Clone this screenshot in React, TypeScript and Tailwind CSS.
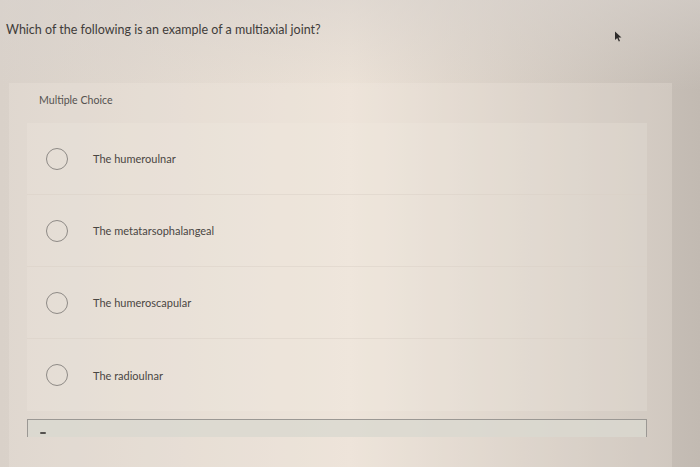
import { useState } from 'react'

const options = [
  'The humeroulnar',
  'The metatarsophalangeal',
  'The humeroscapular',
  'The radioulnar',
]

function Radio({ checked }: { checked: boolean }) {
  return (
    <span className="w-[22px] h-[22px] shrink-0 rounded-full border-[1.5px] border-[#8e8a86] flex items-center justify-center">
      {checked && <span className="w-[10px] h-[10px] rounded-full bg-[#5a5754]" />}
    </span>
  )
}

export default function App() {
  const [selected, setSelected] = useState<number | null>(null)

  return (
    <div
      className="relative w-[700px] h-[467px] overflow-hidden bg-linear-to-r from-[#d9d1c9] via-[#ece2d7] to-[#c2bab2] text-[#4a4643]"
      style={{ fontFamily: 'Lato, "Open Sans", Arial, sans-serif' }}
    >
      {/* top haze */}
      <div className="pointer-events-none absolute inset-x-0 top-0 h-[90px] bg-linear-to-b from-[#d9d3ce]/60 to-transparent" />

      <div className="relative">
        {/* Question */}
        <div className="pt-[22px] pl-[6px] h-[83px]">
          <p className="text-[12.5px] leading-[16px] text-[#3f3c3a]">Which of the following is an example of a multiaxial joint?</p>
        </div>

        {/* Answer card */}
        <div className="ml-[9px] mr-[28px] bg-[#f3ebe2]/25 pt-[11px] pb-[40px]">
          <p className="pl-[30px] text-[10.6px] leading-[13px] text-[#555250]">Multiple Choice</p>

          <div className="mt-[16px] ml-[18px] mr-[25px] bg-[#f6efe6]/20">
            {options.map((label, i) => (
              <button
                key={label}
                onClick={() => setSelected(i)}
                className="w-full h-[72px] flex items-center pl-[19px] gap-[25px] text-left border-b border-[#d9d0c6]/50 last:border-b-0"
              >
                <Radio checked={selected === i} />
                <span className="text-[11px] leading-[13px] text-[#4a4643]">{label}</span>
              </button>
            ))}
          </div>

          {/* Answer input box, cut off by the fold */}
          <div className="mt-[8px] ml-[18px] mr-[25px] h-[18px] border-t-[1.5px] border-x-[1.5px] border-[#9b9894] bg-[#d9d8d0]/80 relative">
            <span className="absolute left-[12px] top-[12px] w-[6px] h-[2px] rounded-full bg-[#55524f]" />
          </div>
        </div>
      </div>

      {/* mouse pointer */}
      <svg className="absolute left-[614px] top-[31px]" width="9" height="11" viewBox="0 0 9 11">
        <path d="M1 0.5 L1 9 L3.2 7 L4.8 10.5 L6 10 L4.5 6.6 L7.5 6.6 Z" fill="#2e2c2b" />
      </svg>
    </div>
  )
}
